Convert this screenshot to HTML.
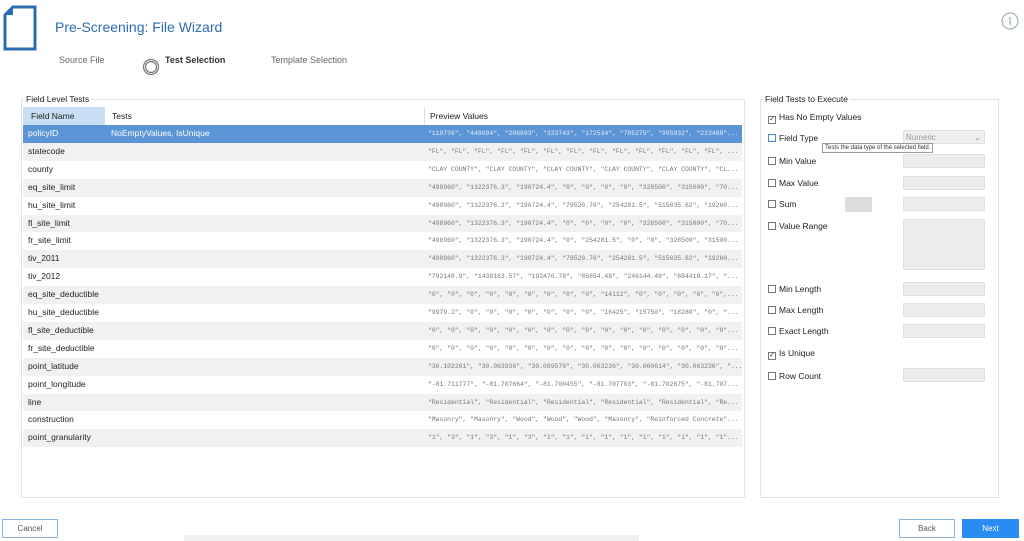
<!DOCTYPE html>
<html><head><style>
*{margin:0;padding:0;box-sizing:border-box}
body{width:1024px;height:541px;background:#fff;font-family:"Liberation Sans",sans-serif;position:relative;overflow:hidden;color:#222}
.a{position:absolute}
.fs{position:absolute;border:1px solid #e2e2e2}
.lg{position:absolute;background:#fff;font-size:8.5px;padding:0 2px;color:#222}
.row{position:absolute;left:23px;width:719px;height:17.9px;font-size:8.5px;line-height:17.9px}
.row span{position:absolute}
.pv{left:405px;font-family:"Liberation Mono",monospace;font-size:6.4px;color:#777;white-space:nowrap}
.cb{position:absolute;left:768px;font-size:8.5px;color:#222}
.cb i{display:inline-block;width:8px;height:8px;border:1px solid #777;vertical-align:-1px;margin-right:3px;font-style:normal;font-size:7px;line-height:6px;text-align:center}
.in{position:absolute;left:903px;width:82px;height:14px;background:#ececec;border:1px solid #e0e0e0}
</style></head><body>
<svg class="a" style="left:3px;top:5px" width="34" height="46" viewBox="0 0 34 46"><path d="M10 2H32V44H2V10Z" fill="none" stroke="#2d6bb0" stroke-width="3"/><path d="M2 10L10 2V10Z" fill="#2d6bb0"/></svg>
<div class="a" style="left:55px;top:19px;font-size:14px;color:#2d6bb0">Pre-Screening: File Wizard</div>
<div class="a" style="left:59px;top:55px;font-size:9px;color:#666">Source File</div>
<svg class="a" style="left:142px;top:58px" width="18" height="18"><circle cx="9" cy="9" r="7.5" fill="none" stroke="#777" stroke-width="1.2"/><circle cx="9" cy="9" r="5.5" fill="none" stroke="#777" stroke-width="1.2"/></svg>
<div class="a" style="left:165px;top:55px;font-size:9px;font-weight:bold;color:#333">Test Selection</div>
<div class="a" style="left:271px;top:55px;font-size:9px;color:#666">Template Selection</div>
<svg class="a" style="left:1001px;top:12px" width="18" height="18"><circle cx="9" cy="9" r="8" fill="none" stroke="#8aa" stroke-width="1"/><line x1="9" y1="5" x2="9" y2="13" stroke="#8aa" stroke-width="1.2"/></svg>

<div class="fs" style="left:21px;top:99px;width:724px;height:399px"></div>
<div class="lg" style="left:24px;top:94px">Field Level Tests</div>
<div class="a" style="left:23px;top:107px;width:82px;height:18px;background:#c6dff4;font-size:8.5px;line-height:18px;padding-left:8px">Field Name</div>
<div class="a" style="left:112px;top:107px;font-size:8.5px;line-height:18px">Tests</div>
<div class="a" style="left:424px;top:107px;width:1px;height:18px;background:#ddd"></div>
<div class="a" style="left:430px;top:107px;font-size:8.5px;line-height:18px">Preview Values</div>
<div id="rows"></div>
<script>
var d=[["policyID","NoEmptyValues, IsUnique",'"119736", "448094", "206893", "333743", "172534", "785275", "995932", "223488"...'],
["statecode","",'"FL", "FL", "FL", "FL", "FL", "FL", "FL", "FL", "FL", "FL", "FL", "FL", "FL", ...'],
["county","",'"CLAY COUNTY", "CLAY COUNTY", "CLAY COUNTY", "CLAY COUNTY", "CLAY COUNTY", "CL...'],
["eq_site_limit","",'"498960", "1322376.3", "190724.4", "0", "0", "0", "0", "328500", "315000", "70...'],
["hu_site_limit","",'"498960", "1322376.3", "190724.4", "79520.76", "254281.5", "515035.62", "19260...'],
["fl_site_limit","",'"498960", "1322376.3", "190724.4", "0", "0", "0", "0", "328500", "315000", "70...'],
["fr_site_limit","",'"498960", "1322376.3", "190724.4", "0", "254281.5", "0", "0", "328500", "31500...'],
["tiv_2011","",'"498960", "1322376.3", "190724.4", "79520.76", "254281.5", "515035.62", "19260...'],
["tiv_2012","",'"792148.9", "1438163.57", "192476.78", "86854.48", "246144.49", "884419.17", "...'],
["eq_site_deductible","",'"0", "0", "0", "0", "0", "0", "0", "0", "0", "14112", "0", "0", "0", "0", "0",...'],
["hu_site_deductible","",'"9979.2", "0", "0", "0", "0", "0", "0", "0", "16425", "15750", "18280", "0", "...'],
["fl_site_deductible","",'"0", "0", "0", "0", "0", "0", "0", "0", "0", "0", "0", "0", "0", "0", "0", "0"...'],
["fr_site_deductible","",'"0", "0", "0", "0", "0", "0", "0", "0", "0", "0", "0", "0", "0", "0", "0", "0"...'],
["point_latitude","",'"30.102261", "30.063936", "30.089579", "30.063236", "30.060614", "30.063236", "...'],
["point_longitude","",'"-81.711777", "-81.707664", "-81.700455", "-81.707703", "-81.702675", "-81.707...'],
["line","",'"Residential", "Residential", "Residential", "Residential", "Residential", "Re...'],
["construction","",'"Masonry", "Masonry", "Wood", "Wood", "Wood", "Masonry", "Reinforced Concrete"...'],
["point_granularity","",'"1", "3", "1", "3", "1", "3", "1", "1", "1", "1", "1", "1", "1", "1", "1", "1"...']];
var h="";d.forEach(function(r,i){var bg=i==0?"#5b95d6":(i%2?"#f1f1f1":"#fff");var c=i==0?"#fff":"#222";
h+='<div class="row" style="top:'+(125+i*17.9)+'px;background:'+bg+';color:'+c+'"><span style="left:5px">'+r[0]+'</span><span style="left:88px">'+r[1]+'</span><span class="pv" style="'+(i==0?"color:#e8f0fa":"")+'">'+r[2]+'</span></div>';});
document.getElementById("rows").innerHTML=h;
</script>

<div class="fs" style="left:760px;top:99px;width:239px;height:399px"></div>
<div class="lg" style="left:763px;top:94px">Field Tests to Execute</div>
<div class="cb" style="top:112px"><i>✓</i>Has No Empty Values</div>
<div class="cb" style="top:133px"><i style="border-color:#4a8ad0"></i>Field Type</div>
<div class="in" style="top:130px;background:#efefef;font-size:8px;color:#999;padding:2px 0 0 2px">Numeric<span style="float:right;margin-right:3px">⌄</span></div>
<div class="a" style="left:822px;top:143px;border:1px solid #999;background:#fff;font-size:6px;padding:1px 2px;color:#333">Tests the data type of the selected field.</div>
<div class="cb" style="top:156px"><i></i>Min Value</div><div class="in" style="top:154px"></div>
<div class="cb" style="top:178px"><i></i>Max Value</div><div class="in" style="top:176px"></div>
<div class="cb" style="top:199px"><i></i>Sum</div><div class="a" style="left:845px;top:197px;width:27px;height:15px;background:#ddd"></div><div class="in" style="top:197px"></div>
<div class="cb" style="top:221px"><i></i>Value Range</div><div class="in" style="top:219px;height:51px"></div>
<div class="cb" style="top:284px"><i></i>Min Length</div><div class="in" style="top:282px"></div>
<div class="cb" style="top:305px"><i></i>Max Length</div><div class="in" style="top:303px"></div>
<div class="cb" style="top:326px"><i></i>Exact Length</div><div class="in" style="top:324px"></div>
<div class="cb" style="top:348px"><i>✓</i>Is Unique</div>
<div class="cb" style="top:371px"><i></i>Row Count</div><div class="in" style="top:368px"></div>

<div class="a" style="left:2px;top:519px;width:56px;height:19px;border:1px solid #8ab4e0;font-size:8px;color:#555;text-align:center;line-height:17px">Cancel</div>
<div class="a" style="left:899px;top:519px;width:56px;height:19px;border:1px solid #8ab4e0;font-size:8px;color:#555;text-align:center;line-height:17px">Back</div>
<div class="a" style="left:962px;top:519px;width:57px;height:19px;background:#2a8bf2;font-size:8px;color:#fff;text-align:center;line-height:19px">Next</div>
<div class="a" style="left:184px;top:535px;width:455px;height:6px;background:#f0f0f0"></div>
</body></html>
